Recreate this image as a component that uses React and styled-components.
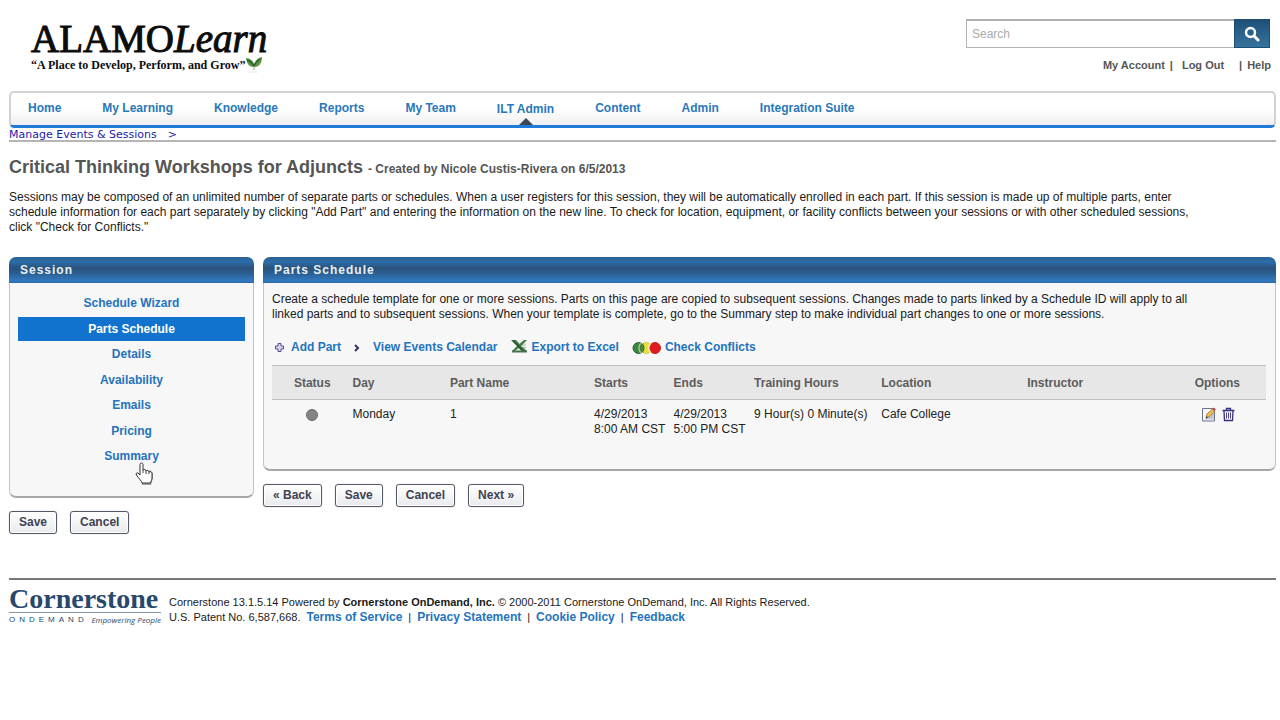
import React from "react";
import styled, { createGlobalStyle } from "styled-components";

const Global = createGlobalStyle`
  *, *::before, *::after { box-sizing: border-box; }
  body {
    margin: 0;
    background: #fff;
    color: #1a1a1a;
    font: 12px/15px "Liberation Sans", Arial, sans-serif;
  }
  h1, h2, p, ul { margin: 0; padding: 0; }
  ul { list-style: none; }
`;

const Page = styled.div`
  padding: 19px 4px 16px 9px;
`;

const Header = styled.header`
  display: flex;
  justify-content: space-between;
  align-items: flex-start;
  height: 72px;
  padding: 0 6px 0 22px;
`;

const Brand = styled.div`
  display: flex;
  flex-direction: column;
  padding-top: 1px;
  color: #0c0c0c;
  font-family: "Liberation Serif", "Times New Roman", serif;
`;

const BrandName = styled.div`
  font-size: 39px;
  line-height: 38px;
  -webkit-text-stroke: 1px #0c0c0c;
`;

const Tagline = styled.div`
  display: flex;
  align-items: center;
  height: 14px;
  font-size: 12px;
  font-weight: bold;
  line-height: 14px;
  white-space: nowrap;
`;

const Tools = styled.div`
  display: flex;
  flex-direction: column;
  align-items: flex-end;
`;

const SearchForm = styled.form`
  display: flex;
  width: 304px;
  height: 29px;
`;

const SearchInput = styled.input`
  flex: 1;
  min-width: 0;
  padding: 0 5px;
  border: 1px solid #b4b4b4;
  border-top: 2px solid #b0b0b0;
  border-right: 0;
  border-radius: 0;
  background: #fff;
  font: 12px "Liberation Sans", Arial, sans-serif;
  &::placeholder { color: #aaa; opacity: 1; }
`;

const SearchButton = styled.button`
  display: flex;
  align-items: center;
  justify-content: center;
  width: 36px;
  padding: 0;
  border: 1px solid #1d4d72;
  background: linear-gradient(#1f5078, #35739f);
`;

const AccountLinks = styled.nav`
  display: flex;
  gap: 5px;
  margin: 10px -1px 0 0;
  font-size: 11px;
  font-weight: bold;
  color: #555;
  a { color: inherit; text-decoration: none; }
`;

const LogOut = styled.a`
  padding: 0 10px 0 4px;
`;

const MainNav = styled.nav`
  display: flex;
  align-items: flex-start;
  gap: 41px;
  height: 37px;
  padding: 8px 17px 0;
  border: 2px solid #d2d2d4;
  border-bottom: 3px solid #1f7bda;
  border-radius: 5px;
  background: linear-gradient(#fff 50%, #efeff0);
`;

const NavLink = styled.a`
  position: relative;
  color: #2878bb;
  font-size: 12px;
  font-weight: bold;
  text-decoration: none;
  white-space: nowrap;
  ${({ $active }) => $active && `
    padding-top: 1px;
    &::after {
      content: "";
      position: absolute;
      top: 17px;
      left: 50%;
      margin-left: -7px;
      border: 7px solid transparent;
      border-top: 0;
      border-bottom-color: #3c4654;
    }
  `}
`;

const Crumbs = styled.nav`
  display: flex;
  gap: 11px;
  height: 14px;
  border-bottom: 2px solid #b5b5b5;
  color: #2a1fa0;
  font: 11px/13px "DejaVu Sans", Verdana, sans-serif;
  a { color: #1c1ca8; text-decoration: none; }
`;

const TitleRow = styled.div`
  display: flex;
  align-items: baseline;
  gap: 5px;
  margin-top: 15px;
  color: #555;
  font-weight: bold;
`;

const Title = styled.h1`
  font-size: 18px;
  line-height: 20px;
`;

const Intro = styled.p`
  max-width: 1195px;
  margin-top: 13px;
`;

const Columns = styled.div`
  display: grid;
  grid-template-columns: 245px minmax(0, 1fr);
  align-items: start;
  gap: 9px;
  margin-top: 22px;
`;

const Panel = styled.section`
  min-height: ${({ $min }) => $min}px;
  border: 1px solid #c4c4c4;
  border-top: 0;
  border-bottom: 2px solid #a8a8a8;
  border-radius: 7px;
  background: #f7f7f7;
`;

const PanelTitle = styled.h2`
  height: 26px;
  margin: 0 -1px 1px;
  padding: 0 11px;
  border-radius: 7px 7px 0 0;
  background: linear-gradient(#2a6296, #2d6ca8 20%, #2a527c 42%, #2a5c8e 60%, #3079be 90%, #2c6aa6);
  color: #e8f1f8;
  font-size: 12px;
  line-height: 26px;
  letter-spacing: 1px;
`;

const Steps = styled.ul`
  display: flex;
  flex-direction: column;
  padding: 7px 8px;
  text-align: center;
`;

const StepLink = styled.a`
  display: block;
  height: 24px;
  margin-bottom: ${({ $gap }) => $gap}px;
  background: ${({ $active }) => ($active ? "#1273ce" : "transparent")};
  color: ${({ $active }) => ($active ? "#fff" : "#2474bd")};
  font-weight: bold;
  line-height: 24px;
  text-decoration: none;
`;

const ButtonRow = styled.div`
  display: flex;
  gap: 13px;
  margin-top: 13px;
`;

const Button = styled.button`
  height: 23px;
  padding: 0 9px;
  border: 1px solid #555b66;
  border-radius: 3px;
  background: linear-gradient(#fff, #e9eaee);
  box-shadow: inset 0 0 0 1px #fff, 0 0 1px #8a8f98;
  color: #3f4350;
  font: bold 12px/15px "Liberation Sans", Arial, sans-serif;
`;

const PanelBody = styled.div`
  padding: 8px 9px 30px 8px;
`;

const Note = styled.p`
  max-width: 940px;
`;

const Actions = styled.div`
  display: flex;
  align-items: center;
  gap: 13px;
  height: 15px;
  margin: 18px 0 10px 3px;
`;

const Action = styled.a`
  display: flex;
  align-items: center;
  gap: ${({ $gap }) => $gap}px;
  color: #2474bd;
  font-weight: bold;
  text-decoration: none;
  white-space: nowrap;
`;

const Table = styled.table`
  width: 100%;
  border-collapse: collapse;
  table-layout: fixed;
`;

const Th = styled.th`
  height: 34px;
  padding: 1px ${({ $right }) => $right || 0}px 0 0;
  border: solid #c0c0c0;
  border-width: 1px 0;
  background: #e7e7e7;
  color: #5c5c5c;
  text-align: ${({ $align }) => $align || "left"};
  white-space: nowrap;
`;

const Td = styled.td`
  padding: 7px 0 0;
  color: #222;
  text-align: ${({ $align }) => $align || "left"};
  vertical-align: top;
  white-space: nowrap;
`;

const StatusDot = styled.span`
  display: inline-block;
  width: 12px;
  height: 12px;
  border: 1px solid #6a6a6a;
  border-radius: 50%;
  background: #848484;
  vertical-align: middle;
`;

const RowTools = styled.div`
  display: flex;
  justify-content: flex-end;
  gap: 6px;
  padding-right: 31px;
`;

const IconButton = styled.button`
  display: flex;
  padding: 0;
  border: 0;
  background: none;
`;

const Footer = styled.footer`
  display: flex;
  align-items: flex-start;
  gap: 8px;
  margin-top: 44px;
  padding-top: 5px;
  border-top: 2px solid #787878;
`;

const Vendor = styled.div`
  width: 152px;
  color: #28486c;
  white-space: nowrap;
`;

const VendorName = styled.div`
  border-bottom: 1px solid #8c96a2;
  font: bold 28px/27px "Liberation Serif", "Times New Roman", serif;
`;

const VendorLine = styled.div`
  display: flex;
  justify-content: space-between;
  font-size: 8px;
  line-height: 13px;
`;

const Spaced = styled.span`
  letter-spacing: 4px;
`;

const Slogan = styled.em`
  font: italic 8px/13px "Open Sans", sans-serif;
`;

const Legal = styled.div`
  padding-top: 10px;
  font-size: 11px;
`;

const LegalRow = styled.div`
  display: flex;
  gap: ${({ $gap }) => $gap || 0}px;
  a {
    color: #2474bd;
    font-size: 12px;
    font-weight: bold;
    text-decoration: none;
  }
`;

const Pointer = styled.svg`
  position: absolute;
  top: 18px;
  left: 50%;
  margin-left: 3px;
  overflow: visible;
`;

const StepItem = styled.li`
  position: relative;
`;

const Leaf = () => (
  <svg width="18" height="18" viewBox="0 0 18 18" aria-hidden="true">
    <path d="M9 11C4 11 2 8 1 2c4 0 8 3 8 7C10 5 12 2 17 1c0 5-2 10-8 10z" fill="#5b9447" />
    <path d="M2 4c3 1 5 3 7 6M9 10c1-3 3-5 6-7" stroke="#2d6427" strokeWidth="1.500" fill="none" />
    <path d="M9 10v4" stroke="#8fae80" fill="none" />
    <path d="M4 16h9" stroke="#d5ddd2" strokeDasharray="2 1" fill="none" />
  </svg>
);

const SearchIcon = () => (
  <svg width="16" height="16" viewBox="0 0 16 16" aria-hidden="true">
    <circle cx="6.500" cy="6.500" r="4.500" fill="none" stroke="#fff" strokeWidth="2.400" />
    <path d="M10 10l4 4" stroke="#fff" strokeWidth="3" strokeLinecap="round" />
  </svg>
);

const PlusIcon = () => (
  <svg width="9" height="9" viewBox="0 0 9 9" aria-hidden="true">
    <path d="M3 .5h3V3h2.500v3H6v2.500H3V6H.5V3H3z" fill="#d9d2ee" stroke="#5a4c94" />
  </svg>
);

const ArrowIcon = () => (
  <svg width="6" height="8" viewBox="0 0 6 8" aria-hidden="true">
    <path d="M1 1l3 3-3 3" fill="none" stroke="#35305e" strokeWidth="2" />
  </svg>
);

const ExcelIcon = () => (
  <svg width="17" height="17" viewBox="0 0 17 17" aria-hidden="true">
    <path d="M9 3h6v9H6z" fill="#e3ece1" />
    <path d="M11 6h4M11 8.500h4" stroke="#a9c0a7" />
    <path d="M0 1h5l3.500 4L13 1h3l-6 6 6 5h-5L7.500 9 4 12H1l5-5z" fill="#3f7a49" />
    <path d="M2 1.500L12 12" stroke="#23552f" strokeWidth="1.500" />
    <path d="M1 12.500h15" stroke="#48704e" strokeWidth="2" />
  </svg>
);

const LightsIcon = () => (
  <svg width="29" height="14" viewBox="0 0 29 14" aria-hidden="true">
    <circle cx="14.500" cy="7" r="5.500" fill="#e8df3c" stroke="#d2c94a" />
    <circle cx="6.500" cy="7" r="5.500" fill="#3b8541" stroke="#2b6532" />
    <path d="M9 2a7 7 0 0 0 0 10" stroke="#a5cc8e" strokeWidth="1.500" fill="none" />
    <path d="M11.500 2.500a8 8 0 0 0 0 9" stroke="#6d8f35" fill="none" />
    <circle cx="23" cy="7" r="5.500" fill="#e21b22" stroke="#c42020" />
    <path d="M18.500 2.500a7 7 0 0 0 0 9" stroke="#f6f1bd" strokeWidth="1.500" fill="none" />
  </svg>
);

const EditIcon = () => (
  <svg width="14" height="15" viewBox="0 0 14 15" aria-hidden="true">
    <path d="M.5 1.500h12v12.500H.5z" fill="#f4f6fb" stroke="#6f7584" />
    <path d="M2 12.500h10V6z" fill="#c3c9dc" />
    <path d="M4 11l1-4 5.500-5 2 2L8 9.500z" fill="#f0bf50" stroke="#9a7032" strokeWidth=".8" />
    <path d="M10 2l1.500-1.500L14 2.500 12.500 4z" fill="#c9504c" />
    <path d="M4 11.500l2-1-1.500-1.500z" fill="#333" />
  </svg>
);

const TrashIcon = () => (
  <svg width="13" height="15" viewBox="0 0 13 15" aria-hidden="true">
    <path d="M.5 3.500h12M4.500 3V1.500h4V3M2 4l.5 9.500h8L11 4" fill="none" stroke="#392f80" strokeWidth="1.300" />
    <path d="M4.500 5.500v6M6.500 5.500v6M8.500 5.500v6" stroke="#4a4288" />
  </svg>
);

const HandPointer = () => (
  <Pointer width="19" height="24" viewBox="0 0 19 24" aria-hidden="true">
    <path d="M7 23h9l2-7v-5l-3-3-2 2-7 6z" fill="#666" opacity=".6" />
    <path
      d="M5 13V2.500C5 .5 8 .5 8 2.500V8c1-1 3-.5 3 1 1-1 3-.5 3 1 1-1 3 0 3 1.500V16c0 2-1 2.500-1.500 5H7c0-2-3-4-5.500-8C.5 11 2 10.500 3 11z"
      fill="#fff"
      stroke="#333"
    />
    <path d="M8 8v3M11 9v3M14 10v2" stroke="#444" />
  </Pointer>
);

const NAV = ["Home", "My Learning", "Knowledge", "Reports", "My Team", "ILT Admin", "Content", "Admin", "Integration Suite"];
const STEPS = ["Schedule Wizard", "Parts Schedule", "Details", "Availability", "Emails", "Pricing", "Summary"];
const WIDTHS = ["8.1%", "9.8%", "14.5%", "8%", "8.1%", "12.8%", "10%", "15%", "13.7%"];

export default function App() {
  return (
    <>
      <Global />
      <Page>
        <Header>
          <Brand>
            <BrandName>ALAMO<em>Learn</em></BrandName>
            <Tagline>“A Place to Develop, Perform, and Grow”<Leaf /></Tagline>
          </Brand>
          <Tools>
            <SearchForm role="search">
              <SearchInput type="text" placeholder="Search" aria-label="Search" />
              <SearchButton type="button" aria-label="Search"><SearchIcon /></SearchButton>
            </SearchForm>
            <AccountLinks>
              <a href="#account">My Account</a>
              <span>|</span>
              <LogOut href="#logout">Log Out</LogOut>
              <span>|</span>
              <a href="#help">Help</a>
            </AccountLinks>
          </Tools>
        </Header>

        <MainNav>
          {NAV.map((label) => (
            <NavLink key={label} href="#nav" $active={label === "ILT Admin"}>{label}</NavLink>
          ))}
        </MainNav>

        <Crumbs>
          <a href="#events">Manage Events &amp; Sessions</a>
          <span>&gt;</span>
        </Crumbs>

        <TitleRow>
          <Title>Critical Thinking Workshops for Adjuncts</Title>
          <span>- Created by Nicole Custis-Rivera on 6/5/2013</span>
        </TitleRow>
        <Intro>
          Sessions may be composed of an unlimited number of separate parts or schedules. When a user registers for this
          session, they will be automatically enrolled in each part. If this session is made up of multiple parts, enter
          schedule information for each part separately by clicking "Add Part" and entering the information on the new
          line. To check for location, equipment, or facility conflicts between your sessions or with other scheduled
          sessions, click "Check for Conflicts."
        </Intro>

        <Columns>
          <div>
            <Panel $min={241}>
              <PanelTitle>Session</PanelTitle>
              <Steps>
                {STEPS.map((label, i) => (
                  <StepItem key={label}>
                    <StepLink href="#step" $active={i === 1} $gap={i % 2 ? 1 : 2}>{label}</StepLink>
                    {label === "Summary" && <HandPointer />}
                  </StepItem>
                ))}
              </Steps>
            </Panel>
            <ButtonRow>
              <Button type="button">Save</Button>
              <Button type="button">Cancel</Button>
            </ButtonRow>
          </div>

          <div>
            <Panel $min={214}>
              <PanelTitle>Parts Schedule</PanelTitle>
              <PanelBody>
                <Note>
                  Create a schedule template for one or more sessions. Parts on this page are copied to subsequent
                  sessions. Changes made to parts linked by a Schedule ID will apply to all linked parts and to
                  subsequent sessions. When your template is complete, go to the Summary step to make individual part
                  changes to one or more sessions.
                </Note>
                <Actions>
                  <Action href="#add" $gap={7}><PlusIcon />Add Part</Action>
                  <Action href="#calendar" $gap={13}><ArrowIcon />View Events Calendar</Action>
                  <Action href="#excel" $gap={4}><ExcelIcon />Export to Excel</Action>
                  <Action href="#conflicts" $gap={4}><LightsIcon />Check Conflicts</Action>
                </Actions>
                <Table>
                  <colgroup>
                    {WIDTHS.map((width, i) => <col key={i} style={{ width }} />)}
                  </colgroup>
                  <thead>
                    <tr>
                      <Th $align="center">Status</Th>
                      <Th>Day</Th>
                      <Th>Part Name</Th>
                      <Th>Starts</Th>
                      <Th>Ends</Th>
                      <Th>Training Hours</Th>
                      <Th>Location</Th>
                      <Th $align="center">Instructor</Th>
                      <Th $align="right" $right={26}>Options</Th>
                    </tr>
                  </thead>
                  <tbody>
                    <tr>
                      <Td $align="center"><StatusDot role="img" aria-label="Pending" /></Td>
                      <Td>Monday</Td>
                      <Td>1</Td>
                      <Td>4/29/2013<br />8:00 AM CST</Td>
                      <Td>4/29/2013<br />5:00 PM CST</Td>
                      <Td>9 Hour(s) 0 Minute(s)</Td>
                      <Td>Cafe College</Td>
                      <Td />
                      <Td>
                        <RowTools>
                          <IconButton type="button" aria-label="Edit part"><EditIcon /></IconButton>
                          <IconButton type="button" aria-label="Delete part"><TrashIcon /></IconButton>
                        </RowTools>
                      </Td>
                    </tr>
                  </tbody>
                </Table>
              </PanelBody>
            </Panel>
            <ButtonRow>
              <Button type="button">« Back</Button>
              <Button type="button">Save</Button>
              <Button type="button">Cancel</Button>
              <Button type="button">Next »</Button>
            </ButtonRow>
          </div>
        </Columns>

        <Footer>
          <Vendor>
            <VendorName>Cornerstone</VendorName>
            <VendorLine><Spaced>ONDEMAND</Spaced><Slogan>Empowering People</Slogan></VendorLine>
          </Vendor>
          <Legal>
            <LegalRow>
              <span>Cornerstone 13.1.5.14 Powered by <b>Cornerstone OnDemand, Inc.</b> © 2000-2011 Cornerstone OnDemand, Inc. All Rights Reserved.</span>
            </LegalRow>
            <LegalRow $gap={6}>
              <span>U.S. Patent No. 6,587,668.</span>
              <a href="#terms">Terms of Service</a>
              <span>|</span>
              <a href="#privacy">Privacy Statement</a>
              <span>|</span>
              <a href="#cookies">Cookie Policy</a>
              <span>|</span>
              <a href="#feedback">Feedback</a>
            </LegalRow>
          </Legal>
        </Footer>
      </Page>
    </>
  );
}
